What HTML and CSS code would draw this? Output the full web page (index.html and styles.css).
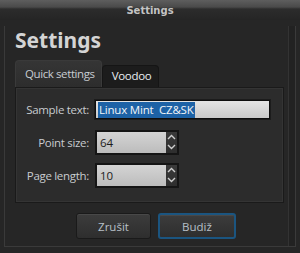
FILE: index.html
```html
<!DOCTYPE html>
<html>
<head>
    <title>Settings</title>
    <link rel="stylesheet" href="styles.css">
</head>
<body>
    <div class="titlebar">Settings</div>
    <div class="window">
        <h1 class="heading">Settings</h1>
        <div class="tabs">
            <div class="tab active">Quick settings</div>
            <div class="tab">Voodoo</div>
        </div>
        <div class="panel">
            <div class="row">
                <label class="label">Sample text:</label>
                <div class="textbox"><span class="selection">Linux Mint&nbsp; CZ&amp;SK</span></div>
            </div>
            <div class="row">
                <label class="label">Point size:</label>
                <div class="spinbox">
                    <div class="spin-value">64</div>
                    <div class="spin-buttons">
                        <svg width="9" height="6" viewBox="0 0 9 6"><path d="M1 5 L4.5 1.5 L8 5" fill="none" stroke="#cfcfcf" stroke-width="1.4"/></svg>
                        <svg width="9" height="6" viewBox="0 0 9 6"><path d="M1 1 L4.5 4.5 L8 1" fill="none" stroke="#cfcfcf" stroke-width="1.4"/></svg>
                    </div>
                </div>
            </div>
            <div class="row">
                <label class="label">Page length:</label>
                <div class="spinbox">
                    <div class="spin-value">10</div>
                    <div class="spin-buttons">
                        <svg width="9" height="6" viewBox="0 0 9 6"><path d="M1 5 L4.5 1.5 L8 5" fill="none" stroke="#cfcfcf" stroke-width="1.4"/></svg>
                        <svg width="9" height="6" viewBox="0 0 9 6"><path d="M1 1 L4.5 4.5 L8 1" fill="none" stroke="#cfcfcf" stroke-width="1.4"/></svg>
                    </div>
                </div>
            </div>
        </div>
        <div class="buttons">
            <button class="btn">Zrušit</button>
            <button class="btn default">Budiž</button>
        </div>
    </div>
</body>
</html>
```

FILE: styles.css
```css
body {
    margin: 0;
    width: 300px;
    height: 253px;
    overflow: hidden;
    background-color: #262626;
    font-family: "Open Sans", "Noto Sans", sans-serif;
    color: #c8cbcf;
}
.titlebar {
    height: 20px;
    line-height: 22px;
    text-align: center;
    font-family: "DejaVu Sans", sans-serif;
    font-size: 10px;
    font-weight: bold;
    color: #c4c4c4;
    background: linear-gradient(#5e5e5e 0, #4a4a4a 7px, #2c2c2c 9px, #252525 20px);
}
.window {
    margin: 6px 4px 4px 4px;
    height: 221px;
    border-left: 1px solid #3a3a3a;
    border-right: 1px solid #3a3a3a;
    border-bottom: 1px solid #3a3a3a;
    box-shadow: inset -6px 0 0 #222, inset -7px 0 0 #333;
    padding: 0 10px 0 10px;
    box-sizing: border-box;
}
.heading {
    margin: 0;
    padding-top: 1px;
    font-family: "Noto Sans", sans-serif;
    font-size: 21px;
    font-weight: bold;
    line-height: 26px;
    color: #d4d4d4;
}
.tabs {
    display: flex;
    align-items: flex-end;
    margin-top: 8px;
    height: 26px;
}
.tab {
    height: 21px;
    padding: 0 7px 0 9px;
    font-size: 11.5px;
    letter-spacing: -0.3px;
    line-height: 20px;
    color: #e8ecf2;
    background-color: #1c1c1c;
    border: 1px solid #151515;
    border-bottom: none;
    border-radius: 4px 4px 0 0;
}
.tab.active {
    height: 26px;
    line-height: 26px;
    padding: 0 6px 0 9px;
    letter-spacing: -0.4px;
    color: #c8ccd2;
    background: linear-gradient(#353535, #2d2d2d);
    border-color: #3a3a3a;
}
.panel {
    height: 116px;
    margin-right: 1px;
    background-color: #2c2c2c;
    border: 1px solid #1a1a1a;
    box-shadow: inset 0 0 0 1px #343434;
    padding-top: 10px;
    box-sizing: border-box;
    display: flex;
    flex-direction: column;
    gap: 11px;
}
.row {
    display: flex;
    align-items: center;
    height: 22px;
}
.label {
    width: 73px;
    text-align: right;
    font-size: 11.5px;
    letter-spacing: -0.3px;
    padding-right: 6px;
}
.textbox {
    width: 175px;
    height: 19px;
    border: 1px solid #0e0e0e;
    box-shadow: 0 0 0 1px #1c1c1c;
    background: linear-gradient(#e4e4e4, #c9c9c9);
    padding: 1px 2px;
    box-sizing: border-box;
    font-size: 11.5px;
    letter-spacing: -0.2px;
    line-height: 16px;
    color: #1a1a1a;
}
.selection {
    background-color: #1d62a6;
    color: #f2f5f8;
    padding: 0 1px;
    display: inline-block;
}
.spinbox {
    display: flex;
    width: 84px;
    height: 25px;
    border: 2px solid #151515;
    box-sizing: border-box;
    background-color: #151515;
}
.spin-value {
    flex: 1;
    background: linear-gradient(#d4d4d4, #bcbcbc);
    color: #1c1c1c;
    font-size: 11.5px;
    line-height: 21px;
    padding-left: 3px;
}
.spin-buttons {
    width: 11px;
    display: flex;
    flex-direction: column;
    align-items: center;
    justify-content: space-around;
    background: linear-gradient(#3a3a3a, #2e2e2e);
}
.buttons {
    display: flex;
    justify-content: center;
    gap: 7px;
    margin-top: 10px;
    margin-left: 12px;
}
.btn {
    width: 75px;
    height: 26px;
    font-family: "Open Sans", "Noto Sans", sans-serif;
    font-size: 11.5px;
    color: #b8c0c8;
    background: linear-gradient(#3c3c3c, #2e2e2e);
    border: 1px solid #1a1a1a;
    border-radius: 3px;
    box-shadow: inset 0 1px 0 #484848;
}
.btn.default {
    width: 78px;
    border: 2px solid #1b5580;
}
```
